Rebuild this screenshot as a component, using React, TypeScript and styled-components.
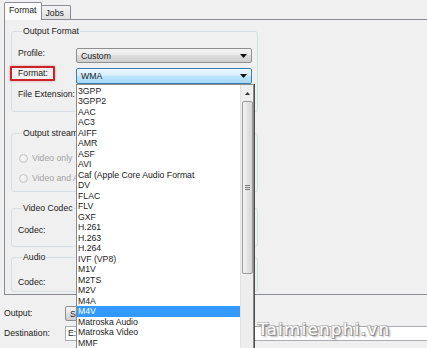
import React from "react";
import styled, { createGlobalStyle, css } from "styled-components";

const Global = createGlobalStyle`
  html, body { margin: 0; padding: 0; background: #f0f0f0; }
  body { font-family: "Liberation Sans", Arial, sans-serif; font-size: 8.7px; color: #1b1b1b; }
  * { box-sizing: border-box; }
`;

const Window = styled.div`
  position: relative;
  width: 427px;
  height: 348px;
  overflow: hidden;
  background: #f0f0f0;
`;

const TabStrip = styled.div`
  display: flex;
  align-items: flex-end;
  height: 19px;
  padding-left: 4px;
`;

const Tab = styled.div<{ $active?: boolean }>`
  display: flex;
  align-items: center;
  padding: 0 4px;
  border: 1px solid #898c95;
  border-bottom: none;
  border-radius: 2px 2px 0 0;
  line-height: 12px;
  ${(p) =>
    p.$active
      ? css`
          height: 18px;
          margin-bottom: -1px;
          background: #fbfbfb;
          position: relative;
          z-index: 1;
          padding-bottom: 4px;
        `
      : css`
          height: 14px;
          margin-left: -1px;
          padding-left: 4px;
          padding-right: 6px;
          background: linear-gradient(#f4f4f4, #e1e1e1);
        `}
`;

const TabPage = styled.div`
  height: 276px;
  margin-left: 4px;
  border-top: 1px solid #898c95;
  border-left: 1px solid #898c95;
  border-bottom: 1px solid #898c95;
  padding: 5px 0 0 6px;
  display: flex;
  flex-direction: column;
`;

const Group = styled.fieldset<{ $h: number; $mt: number }>`
  margin: ${(p) => p.$mt}px 0 0 0;
  padding: 0 6px;
  width: 247px;
  height: ${(p) => p.$h}px;
  border: 1px solid #d5dfe5;
  border-radius: 3px;
  min-inline-size: 0;
`;

const Legend = styled.legend`
  padding: 0 1px;
  margin-left: 4px;
  line-height: 12px;
  height: 12px;
`;

const FormGrid = styled.div<{ $mt: number }>`
  display: grid;
  grid-template-columns: 58px 176px;
  row-gap: 5px;
  margin-top: ${(p) => p.$mt}px;
`;

const Label = styled.span`
  line-height: 12px;
  margin-top: -1px;
  white-space: nowrap;
`;

const Marked = styled.span`
  position: relative;
  &::after {
    content: "";
    position: absolute;
    left: -8px;
    right: -7px;
    top: -2px;
    bottom: -3px;
    border: 2px solid #cc2229;
    border-radius: 1px;
    box-shadow: 0 0 2px rgba(190, 20, 20, 0.55);
  }
`;

const ComboWrap = styled.div`
  position: relative;
`;

const Combo = styled.div<{ $focused?: boolean; $h?: number; $w?: number }>`
  display: flex;
  align-items: center;
  justify-content: space-between;
  height: ${(p) => p.$h ?? 15}px;
  width: ${(p) => (p.$w ? `${p.$w}px` : "auto")};
  padding: 0 4px 0 4px;
  border: 1px solid ${(p) => (p.$focused ? "#3c7fb1" : "#8e8f8f")};
  border-radius: 2px;
  background: ${(p) =>
    p.$focused
      ? "linear-gradient(#eaf6fd 0%, #d9f0fc 45%, #bee6fd 50%, #a7d9f5 100%)"
      : "linear-gradient(#f2f2f2 0%, #ebebeb 45%, #dddddd 50%, #cfcfcf 100%)"};
  line-height: 12px;
`;

const Arrow = () => (
  <svg width="7" height="4" viewBox="0 0 7 4">
    <path d="M0 0 H7 L3.5 4 Z" fill="#111" />
  </svg>
);

const TextField = styled.div<{ $wide?: boolean }>`
  height: 15px;
  margin-right: ${(p) => (p.$wide ? "-10px" : "0")};
  border: 1px solid #abadb3;
  background: #fff;
  padding: 0 2px;
  line-height: 13px;
`;

const RadioRows = styled.div<{ $mt: number }>`
  display: flex;
  flex-direction: column;
  gap: 8px;
  margin-top: ${(p) => p.$mt}px;
  padding-left: 1px;
`;

const RadioRow = styled.div`
  display: flex;
  align-items: center;
  gap: 4px;
  height: 12px;
  color: #a3a3a3;
`;

const RadioDot = styled.span`
  width: 9px;
  height: 9px;
  border-radius: 50%;
  border: 1px solid #c6c6c6;
  background: radial-gradient(circle at 40% 40%, #fafafa, #e2e2e2);
`;

const CodecRow = styled.div<{ $mt: number }>`
  display: grid;
  grid-template-columns: 58px 176px;
  margin-top: ${(p) => p.$mt}px;
  align-items: center;
`;

const BottomForm = styled.div`
  display: grid;
  grid-template-columns: 61px 1fr;
  row-gap: 5px;
  padding: 11px 0 0 4px;
  align-items: center;
`;

const DropList = styled.div`
  position: absolute;
  top: 100%;
  left: 0;
  width: 178px;
  height: 272px;
  background: #fff;
  border: 1px solid #8a8a8a;
  box-shadow: 1px 0 0 #4d4d4d;
  display: flex;
  z-index: 5;
`;

const Items = styled.div`
  flex: 1;
  padding-top: 0.5px;
`;

const Item = styled.div<{ $sel?: boolean }>`
  height: 10.5px;
  line-height: 10.5px;
  padding-left: 1px;
  white-space: nowrap;
  overflow: hidden;
  color: ${(p) => (p.$sel ? "#fff" : "#1b1b1b")};
  background: ${(p) => (p.$sel ? "#3399ff" : "transparent")};
`;

const ScrollBar = styled.div`
  width: 13px;
  background: #eeeeee;
  border-left: 1px solid #e2e2e2;
  display: flex;
  flex-direction: column;
  align-items: center;
  padding-top: 1px;
`;

const ScrollBtn = styled.div`
  width: 12px;
  height: 14px;
  display: flex;
  align-items: center;
  justify-content: center;
`;

const Thumb = styled.div`
  margin-top: 1px;
  width: 11px;
  height: 173px;
  border: 1px solid #9b9b9b;
  border-radius: 2px;
  background: linear-gradient(90deg, #f3f3f3, #e4e4e4 50%, #d6d6d6);
  display: flex;
  align-items: center;
  justify-content: center;
`;

const Grip = () => (
  <svg width="5" height="5" viewBox="0 0 5 5">
    <path d="M0 0.5 H5 M0 2.5 H5 M0 4.5 H5" stroke="#7a7a7a" strokeWidth="1" />
  </svg>
);

const UpArrow = () => (
  <svg width="5" height="3" viewBox="0 0 5 3">
    <path d="M0 3 H5 L2.5 0 Z" fill="#333" />
  </svg>
);

const Watermark = styled.div`
  position: absolute;
  left: 258px;
  top: 320px;
  font-family: "DejaVu Sans", sans-serif;
  font-size: 16.5px;
  letter-spacing: 1.4px;
  color: #ffffff;
  text-shadow: 1px 1px 0 #8a8a8a, -1px -1px 0 #c8c8c8, 1px -1px 0 #b0b0b0,
    -1px 1px 0 #b0b0b0, 2px 2px 2px rgba(0, 0, 0, 0.35);
  z-index: 10;
  pointer-events: none;
`;

const formats = [
  "3GPP",
  "3GPP2",
  "AAC",
  "AC3",
  "AIFF",
  "AMR",
  "ASF",
  "AVI",
  "Caf (Apple Core Audio Format",
  "DV",
  "FLAC",
  "FLV",
  "GXF",
  "H.261",
  "H.263",
  "H.264",
  "IVF (VP8)",
  "M1V",
  "M2TS",
  "M2V",
  "M4A",
  "M4V",
  "Matroska Audio",
  "Matroska Video",
  "MMF",
];

export default function App() {
  return (
    <Window>
      <Global />
      <TabStrip>
        <Tab $active>Format</Tab>
        <Tab>Jobs</Tab>
      </TabStrip>
      <TabPage>
        <Group $h={87} $mt={0}>
          <Legend>Output Format</Legend>
          <FormGrid $mt={11}>
            <Label>Profile:</Label>
            <Combo>
              <span>Custom</span>
              <Arrow />
            </Combo>
            <Label>
              <Marked>Format:</Marked>
            </Label>
            <ComboWrap>
              <Combo $focused $h={16}>
                <span>WMA</span>
                <Arrow />
              </Combo>
              <DropList>
                <Items>
                  {formats.map((f) => (
                    <Item key={f} $sel={f === "M4V"}>
                      {f}
                    </Item>
                  ))}
                </Items>
                <ScrollBar>
                  <ScrollBtn>
                    <UpArrow />
                  </ScrollBtn>
                  <Thumb>
                    <Grip />
                  </Thumb>
                </ScrollBar>
              </DropList>
            </ComboWrap>
            <Label>File Extension:</Label>
            <TextField />
          </FormGrid>
        </Group>
        <Group $h={65} $mt={15}>
          <Legend>Output stream</Legend>
          <RadioRows $mt={13}>
            <RadioRow>
              <RadioDot />
              Video only
            </RadioRow>
            <RadioRow>
              <RadioDot />
              Video and Audio
            </RadioRow>
          </RadioRows>
        </Group>
        <Group $h={45} $mt={10}>
          <Legend>Video Codec</Legend>
          <CodecRow $mt={9}>
            <Label>Codec:</Label>
            <Combo>
              <span />
              <Arrow />
            </Combo>
          </CodecRow>
        </Group>
        <Group $h={41} $mt={4}>
          <Legend>Audio</Legend>
          <CodecRow $mt={12}>
            <Label>Codec:</Label>
            <Combo>
              <span />
              <Arrow />
            </Combo>
          </CodecRow>
        </Group>
      </TabPage>
      <BottomForm>
        <Label>Output:</Label>
        <Combo $w={175}>
          <span>Same as source</span>
          <Arrow />
        </Combo>
        <Label>Destination:</Label>
        <TextField $wide>E:\Output</TextField>
      </BottomForm>
      <Watermark>Taimienphi.vn</Watermark>
    </Window>
  );
}
